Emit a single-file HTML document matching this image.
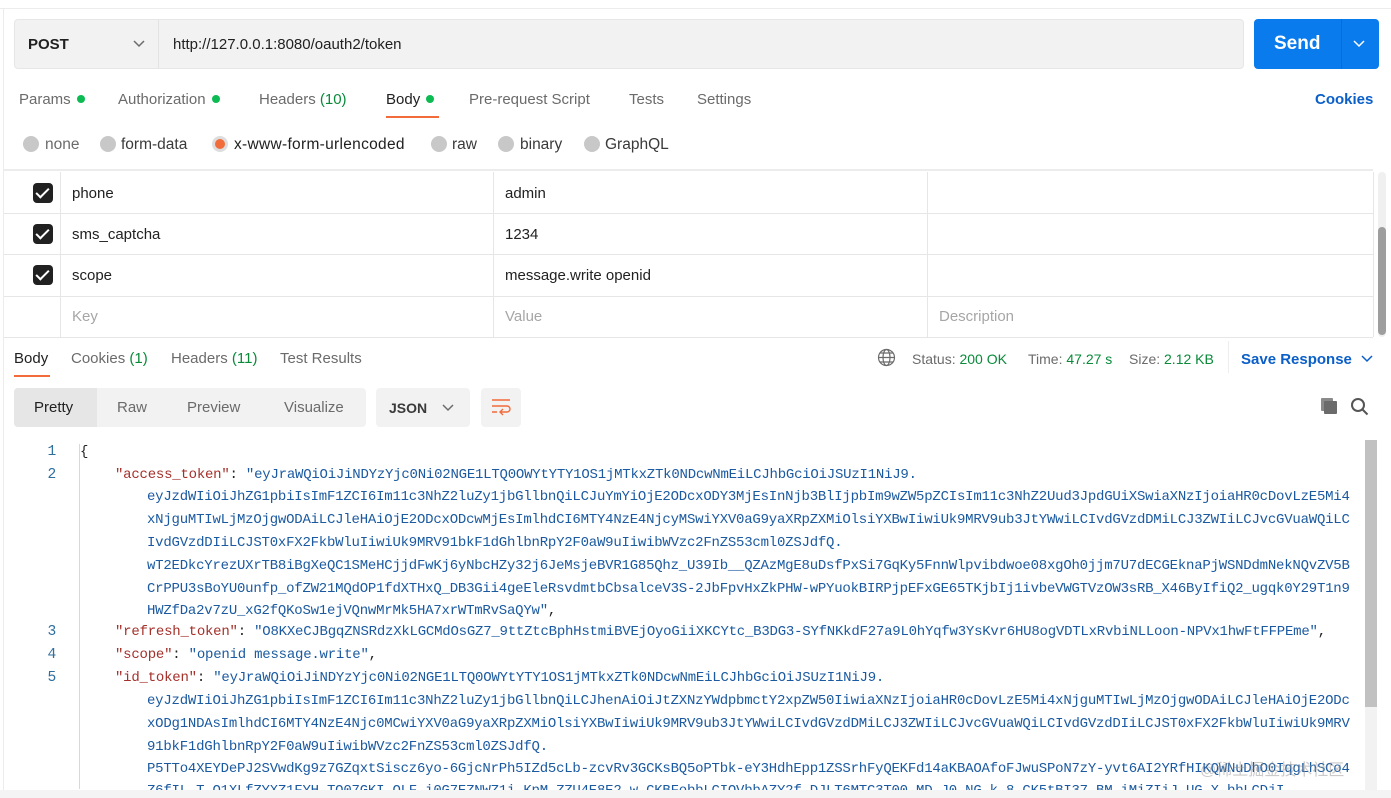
<!DOCTYPE html>
<html><head><meta charset="utf-8"><style>
*{margin:0;padding:0;box-sizing:border-box}
body{width:1391px;height:798px;overflow:hidden;background:#fff;font-family:"Liberation Sans",sans-serif;color:#212121;position:relative}
.a{position:absolute;white-space:nowrap}
.g{color:#6b6b6b;font-size:15px}
.dot{display:inline-block;width:8px;height:8px;border-radius:50%;background:#0cbb52;margin-left:6px;vertical-align:1px}
.rad{position:absolute;width:16px;height:16px;border-radius:50%;background:#c8c8c8;top:136px}
.cb{position:absolute;left:33px;width:20px;height:20px;border-radius:4px;background:#212121}
.cb:after{content:"";position:absolute;left:6px;top:2px;width:5px;height:11px;border:solid #fff;border-width:0 2.5px 2.5px 0;transform:rotate(45deg)}
.hl{position:absolute;left:4px;width:1369px;height:1px;background:#e6e6e6}
.vl{position:absolute;width:1px;background:#e6e6e6;top:172px;height:165px}
.code{position:absolute;left:0;top:441px;width:1365px;height:349px;overflow:hidden;font-family:"Liberation Mono",monospace;font-size:14px;letter-spacing:-0.22px}
.ln{position:absolute;left:0;width:56px;text-align:right;color:#2e6f9e;font-size:14.6px}
.cl{position:absolute;white-space:pre;color:#1b5aa0}
.k{color:#a4302a}.p{color:#212121}
.r{font-size:15.5px}
</style></head><body>
<div class="a" style="left:0;top:8px;width:1391px;height:1px;background:#ececec"></div>
<div class="a" style="left:3px;top:8px;width:1px;height:790px;background:#ececec"></div>
<div class="a" style="left:14px;top:19px;width:1230px;height:50px;background:#f2f2f2;border:1px solid #e6e6e6;border-radius:4px"></div>
<div class="a" style="left:158px;top:20px;width:1px;height:48px;background:#e2e2e2"></div>
<div class="a" style="left:28px;top:36px;font-weight:bold;font-size:15px;color:#212121">POST</div>
<svg class="a" style="left:133px;top:40px" width="12" height="8"><path d="M1 1l5 5 5-5" stroke="#6b6b6b" stroke-width="1.5" fill="none"/></svg>
<div class="a" style="left:173px;top:36px;font-size:15px;color:#212121">http://127.0.0.1:8080/oauth2/token</div>
<div class="a" style="left:1254px;top:19px;width:125px;height:50px;background:#097bed;border-radius:4px"></div>
<div class="a" style="left:1341px;top:19px;width:1px;height:50px;background:#0a6bd0"></div>
<div class="a" style="left:1274px;top:33px;font-size:19px;font-weight:bold;color:#fff">Send</div>
<svg class="a" style="left:1353px;top:40px" width="12" height="8"><path d="M1 1l5 5 5-5" stroke="#fff" stroke-width="1.5" fill="none"/></svg>
<div class="a g" style="left:19px;top:91px">Params<span class="dot"></span></div>
<div class="a g" style="left:118px;top:91px">Authorization<span class="dot"></span></div>
<div class="a g" style="left:259px;top:91px">Headers <span style="color:#0a8a3a">(10)</span></div>
<div class="a" style="left:386px;top:91px;font-size:15px;color:#212121">Body<span class="dot"></span></div>
<div class="a" style="left:386px;top:116px;width:53px;height:2px;background:#f26b3a"></div>
<div class="a g" style="left:469px;top:91px">Pre-request Script</div>
<div class="a g" style="left:629px;top:91px">Tests</div>
<div class="a g" style="left:697px;top:91px">Settings</div>
<div class="a" style="left:1315px;top:91px;font-size:15px;color:#0b5fc9;font-weight:bold">Cookies</div>
<div class="rad" style="left:23px"></div><div class="a g r" style="left:45px;top:136px">none</div>
<div class="rad" style="left:100px"></div><div class="a g r" style="left:121px;top:136px;color:#3a3a3a">form-data</div>
<div class="rad" style="left:212px;background:#ddd"></div><div class="a" style="left:215px;top:139px;width:10px;height:10px;border-radius:50%;background:#f26b3a"></div><div class="a r" style="left:234px;top:136px;color:#212121;letter-spacing:0.3px">x-www-form-urlencoded</div>
<div class="rad" style="left:431px"></div><div class="a g r" style="left:452px;top:136px;color:#3a3a3a">raw</div>
<div class="rad" style="left:498px"></div><div class="a g r" style="left:520px;top:136px;color:#3a3a3a">binary</div>
<div class="rad" style="left:584px"></div><div class="a g r" style="left:605px;top:136px;color:#3a3a3a">GraphQL</div>
<div class="hl" style="top:169px;height:2px;background:#ececec"></div>
<div class="hl" style="top:213px"></div><div class="hl" style="top:254px"></div><div class="hl" style="top:296px"></div><div class="hl" style="top:337px"></div>
<div class="vl" style="left:60px"></div><div class="vl" style="left:493px"></div><div class="vl" style="left:927px"></div><div class="vl" style="left:1373px"></div>
<div class="cb" style="top:183px"></div><div class="cb" style="top:224px"></div><div class="cb" style="top:265px"></div>
<div class="a" style="left:72px;top:185px;font-size:15px">phone</div><div class="a" style="left:505px;top:185px;font-size:15px">admin</div>
<div class="a" style="left:72px;top:226px;font-size:15px">sms_captcha</div><div class="a" style="left:505px;top:226px;font-size:15px">1234</div>
<div class="a" style="left:72px;top:267px;font-size:15px">scope</div><div class="a" style="left:505px;top:267px;font-size:15px">message.write openid</div>
<div class="a" style="left:72px;top:308px;font-size:15px;color:#a6a6a6">Key</div><div class="a" style="left:505px;top:308px;font-size:15px;color:#a6a6a6">Value</div><div class="a" style="left:939px;top:308px;font-size:15px;color:#a6a6a6">Description</div>
<div class="a" style="left:1378px;top:172px;width:8px;height:165px;background:#f0f0f0;border-radius:4px"></div>
<div class="a" style="left:1378px;top:227px;width:8px;height:108px;background:#9e9e9e;border-radius:4px"></div>
<div class="a" style="left:14px;top:350px;font-size:15px">Body</div>
<div class="a" style="left:14px;top:375px;width:36px;height:2px;background:#f26b3a"></div>
<div class="a g" style="left:71px;top:350px">Cookies <span style="color:#0a8a3a">(1)</span></div>
<div class="a g" style="left:171px;top:350px">Headers <span style="color:#0a8a3a">(11)</span></div>
<div class="a g" style="left:280px;top:350px">Test Results</div>
<svg class="a" style="left:877px;top:348px" width="19" height="19" viewBox="0 0 19 19" fill="none" stroke="#6b6b6b" stroke-width="1.2"><circle cx="9.5" cy="9.5" r="8"/><ellipse cx="9.5" cy="9.5" rx="3.5" ry="8"/><path d="M1.5 9.5h16M3 5h13M3 14h13"/></svg>
<div class="a g" style="left:912px;top:351px;font-size:14px">Status: <span style="color:#0a8a3a">200 OK</span></div>
<div class="a g" style="left:1028px;top:351px;font-size:14px">Time: <span style="color:#0a8a3a">47.27 s</span></div>
<div class="a g" style="left:1129px;top:351px;font-size:14px">Size: <span style="color:#0a8a3a">2.12 KB</span></div>
<div class="a" style="left:1228px;top:341px;width:1px;height:32px;background:#eee"></div>
<div class="a" style="left:1241px;top:351px;font-size:15px;color:#0b5fc9;font-weight:bold">Save Response</div>
<svg class="a" style="left:1361px;top:355px" width="12" height="8"><path d="M1 1l5 5 5-5" stroke="#0b5fc9" stroke-width="1.5" fill="none"/></svg>
<div class="a" style="left:14px;top:388px;width:352px;height:39px;background:#f2f2f2;border-radius:4px"></div>
<div class="a" style="left:14px;top:388px;width:83px;height:39px;background:#e6e6e6;border-radius:4px 0 0 4px"></div>
<div class="a" style="left:34px;top:399px;font-size:15px">Pretty</div>
<div class="a g" style="left:117px;top:399px">Raw</div>
<div class="a g" style="left:187px;top:399px">Preview</div>
<div class="a g" style="left:284px;top:399px">Visualize</div>
<div class="a" style="left:376px;top:388px;width:94px;height:39px;background:#f2f2f2;border-radius:4px"></div>
<div class="a" style="left:389px;top:400px;font-size:14px;font-weight:bold;color:#3a3a3a">JSON</div>
<svg class="a" style="left:442px;top:404px" width="12" height="8"><path d="M1 1l5 5 5-5" stroke="#6b6b6b" stroke-width="1.5" fill="none"/></svg>
<div class="a" style="left:481px;top:388px;width:40px;height:39px;background:#f2f2f2;border-radius:4px"></div>
<svg class="a" style="left:491px;top:398px" width="20" height="18" fill="none" stroke="#f26b3a" stroke-width="1.4"><path d="M1 2h18M1 8h15a3 3 0 0 1 0 6h-6M1 14h5M12 11l-3 3 3 3"/></svg>
<svg class="a" style="left:1320px;top:397px" width="18" height="18"><rect x="1" y="1" width="12" height="13" rx="1" fill="#8a8a8a"/><rect x="4" y="4" width="13" height="13" rx="1" fill="#6b6b6b"/></svg>
<svg class="a" style="left:1350px;top:397px" width="19" height="19" fill="none" stroke="#555" stroke-width="2"><circle cx="8" cy="8" r="6"/><path d="M12.5 12.5l5 5"/></svg>
<div class="code">
<div class="ln" style="top:3px">1</div><div class="ln" style="top:26px">2</div><div class="ln" style="top:183px">3</div><div class="ln" style="top:206px">4</div><div class="ln" style="top:229px">5</div>
<div class="a" style="left:79px;top:3px;width:1px;height:345px;background:#d8d8d8"></div>
<div class="cl p" style="left:80px;top:3px">{</div>
<div class="cl" style="left:115px;top:26px"><span class="k">"access_token"</span><span class="p">: </span>"eyJraWQiOiJiNDYzYjc0Ni02NGE1LTQ0OWYtYTY1OS1jMTkxZTk0NDcwNmEiLCJhbGciOiJSUzI1NiJ9.</div>
<div class="cl" style="left:147px;top:48px">eyJzdWIiOiJhZG1pbiIsImF1ZCI6Im11c3NhZ2luZy1jbGllbnQiLCJuYmYiOjE2ODcxODY3MjEsInNjb3BlIjpbIm9wZW5pZCIsIm11c3NhZ2Uud3JpdGUiXSwiaXNzIjoiaHR0cDovLzE5Mi4</div>
<div class="cl" style="left:147px;top:71px">xNjguMTIwLjMzOjgwODAiLCJleHAiOjE2ODcxODcwMjEsImlhdCI6MTY4NzE4NjcyMSwiYXV0aG9yaXRpZXMiOlsiYXBwIiwiUk9MRV9ub3JtYWwiLCIvdGVzdDMiLCJ3ZWIiLCJvcGVuaWQiLC</div>
<div class="cl" style="left:147px;top:94px">IvdGVzdDIiLCJST0xFX2FkbWluIiwiUk9MRV91bkF1dGhlbnRpY2F0aW9uIiwibWVzc2FnZS53cml0ZSJdfQ.</div>
<div class="cl" style="left:147px;top:117px">wT2EDkcYrezUXrTB8iBgXeQC1SMeHCjjdFwKj6yNbcHZy32j6JeMsjeBVR1G85Qhz_U39Ib__QZAzMgE8uDsfPxSi7GqKy5FnnWlpvibdwoe08xgOh0jjm7U7dECGEknaPjWSNDdmNekNQvZV5B</div>
<div class="cl" style="left:147px;top:140px">CrPPU3sBoYU0unfp_ofZW21MQdOP1fdXTHxQ_DB3Gii4geEleRsvdmtbCbsalceV3S-2JbFpvHxZkPHW-wPYuokBIRPjpEFxGE65TKjbIj1ivbeVWGTVzOW3sRB_X46ByIfiQ2_ugqk0Y29T1n9</div>
<div class="cl" style="left:147px;top:162px">HWZfDa2v7zU_xG2fQKoSw1ejVQnwMrMk5HA7xrWTmRvSaQYw"<span class="p">,</span></div>
<div class="cl" style="left:115px;top:183px"><span class="k">"refresh_token"</span><span class="p">: </span>"O8KXeCJBgqZNSRdzXkLGCMdOsGZ7_9ttZtcBphHstmiBVEjOyoGiiXKCYtc_B3DG3-SYfNKkdF27a9L0hYqfw3YsKvr6HU8ogVDTLxRvbiNLLoon-NPVx1hwFtFFPEme"<span class="p">,</span></div>
<div class="cl" style="left:115px;top:206px"><span class="k">"scope"</span><span class="p">: </span>"openid message.write"<span class="p">,</span></div>
<div class="cl" style="left:115px;top:229px"><span class="k">"id_token"</span><span class="p">: </span>"eyJraWQiOiJiNDYzYjc0Ni02NGE1LTQ0OWYtYTY1OS1jMTkxZTk0NDcwNmEiLCJhbGciOiJSUzI1NiJ9.</div>
<div class="cl" style="left:147px;top:252px">eyJzdWIiOiJhZG1pbiIsImF1ZCI6Im11c3NhZ2luZy1jbGllbnQiLCJhenAiOiJtZXNzYWdpbmctY2xpZW50IiwiaXNzIjoiaHR0cDovLzE5Mi4xNjguMTIwLjMzOjgwODAiLCJleHAiOjE2ODc</div>
<div class="cl" style="left:147px;top:275px">xODg1NDAsImlhdCI6MTY4NzE4Njc0MCwiYXV0aG9yaXRpZXMiOlsiYXBwIiwiUk9MRV9ub3JtYWwiLCIvdGVzdDMiLCJ3ZWIiLCJvcGVuaWQiLCIvdGVzdDIiLCJST0xFX2FkbWluIiwiUk9MRV</div>
<div class="cl" style="left:147px;top:298px">91bkF1dGhlbnRpY2F0aW9uIiwibWVzc2FnZS53cml0ZSJdfQ.</div>
<div class="cl" style="left:147px;top:320px">P5TTo4XEYDePJ2SVwdKg9z7GZqxtSiscz6yo-6GjcNrPh5IZd5cLb-zcvRv3GCKsBQ5oPTbk-eY3HdhEpp1ZSSrhFyQEKFd14aKBAOAfoFJwuSPoN7zY-yvt6AI2YRfHIKQWNuDhO0IqgLhSCo4</div>
<div class="cl" style="left:147px;top:342px">Z6fIL_T_O1XLfZYXZ1FYH_TO07GKI_OLF_i0G7EZNWZ1i_KpM_ZZU4E8E2_w_CKBFobbLCIOVbbAZY2f_DJLT6MTC3T00_MD_J0_NG_k_8_CK5tBI37_BM_iMiZIiJ_UG_X_bbLCDjI</div>
</div>
<div class="a" style="left:1200px;top:756px;font-family:'Liberation Sans','Noto Sans CJK SC',sans-serif;font-size:16px;color:rgba(150,150,150,0.5)">@稀土掘金技术社区</div>
<div class="a" style="left:1365px;top:440px;width:12px;height:350px;background:#f2f2f2"></div>
<div class="a" style="left:1365px;top:440px;width:12px;height:267px;background:#c1c1c1"></div>
<div class="a" style="left:0;top:790px;width:1391px;height:8px;background:#f4f4f4"></div>
</body></html>
